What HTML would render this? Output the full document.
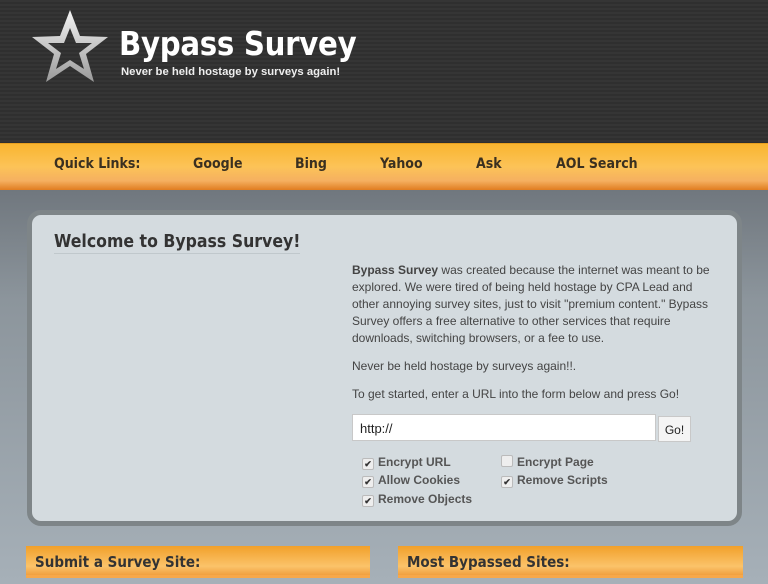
<!DOCTYPE html>
<html><head><style>
body{margin:0;width:768px;height:584px;overflow:hidden;background:linear-gradient(#70777e 190px,#8c959c 300px,#a6b0b8 584px);font-family:"Liberation Sans",sans-serif;position:relative}
.hd{position:absolute;left:0;top:0;width:768px;height:143px;background:repeating-linear-gradient(#353535 0 2px,#2f2f2f 2px 4px)}
.c{font-family:"DejaVu Sans Condensed","DejaVu Sans",sans-serif;font-stretch:condensed}
.title{position:absolute;left:119px;top:25px;color:#fff;font-weight:bold;font-size:32.5px;letter-spacing:-0.3px}
.sub{position:absolute;left:121px;top:66px;color:#eee;font:bold 11.3px "Liberation Sans",sans-serif}
.nav{position:absolute;left:0;top:143px;width:768px;height:46px;background:linear-gradient(#f9b530 0,#fcc358 50%,#f5b060 80%,#e07d20 100%);border-top:1px solid #e8a020}
.nav span{position:absolute;top:12px;font-weight:bold;font-size:14px;color:#3a3020}
.panel{position:absolute;left:27px;top:210px;width:705px;height:306px;background:#d4dbdf;border:5px solid #7e8588;border-radius:14px}
.h1{position:absolute;left:22px;top:17px;font-weight:bold;font-size:17.5px;color:#333;border-bottom:1px solid #c0c8cc;padding-bottom:1px}
.txt{position:absolute;left:320px;top:47px;width:370px;font-size:12px;line-height:17px;color:#444}
.txt p{margin:0 0 11px}
.in{position:absolute;left:320px;top:199px;height:27px;background:#fff;border:1px solid #c8c8c8;font-size:13px;line-height:27px;padding-left:7px;box-sizing:border-box;width:304px;color:#222}
.go{position:absolute;left:626px;top:201px;width:33px;height:26px;background:#f4f4f4;border:1px solid #c8c8c8;font-size:12px;line-height:26px;text-align:center;color:#222;box-sizing:border-box}
.cb{position:absolute;font:bold 12px "Liberation Sans",sans-serif;color:#555}
.cb i{display:inline-block;width:10px;height:10px;border:1px solid #bbb;background:#eee;border-radius:2px;margin-right:4px;font-style:normal;font-size:9px;line-height:10px;text-align:center;color:#333;vertical-align:-1px}
.box{position:absolute;top:546px;height:32px;background:linear-gradient(#f1a02a,#fbc36a 70%,#f0a040);border-bottom:3px solid #f7a84a;font-weight:bold;font-size:15px;color:#333;line-height:32px;padding-left:9px;box-sizing:border-box}
</style></head><body>
<div class="hd">
<svg style="position:absolute;left:30px;top:8px" width="80" height="77" viewBox="0 0 80 77"><defs><linearGradient id="g" x1="0" y1="0" x2="0" y2="1"><stop offset="0" stop-color="#f4f4f4"/><stop offset="1" stop-color="#9a9a9a"/></linearGradient></defs><path d="M40 2 L50 28 L78 29 L56 46 L64 74 L40 58 L16 74 L24 46 L2 29 L30 28 Z M40 20 L34 35 L18 35 L31 45 L26 61 L40 52 L54 61 L49 45 L62 35 L46 35 Z" fill="url(#g)" fill-rule="evenodd"/></svg>
<div class="title c">Bypass Survey</div>
<div class="sub">Never be held hostage by surveys again!</div>
</div>
<div class="nav c"><span style="left:54px">Quick Links:</span><span style="left:193px">Google</span><span style="left:295px">Bing</span><span style="left:380px">Yahoo</span><span style="left:476px">Ask</span><span style="left:556px">AOL Search</span></div>
<div class="panel">
<div class="h1 c">Welcome to Bypass Survey!</div>
<div class="txt"><p><b>Bypass Survey</b> was created because the internet was meant to be explored. We were tired of being held hostage by CPA Lead and other annoying survey sites, just to visit "premium content." Bypass Survey offers a free alternative to other services that require downloads, switching browsers, or a fee to use.</p><p>Never be held hostage by surveys again!!.</p><p>To get started, enter a URL into the form below and press Go!</p></div>
<div class="in">http://</div><div class="go">Go!</div>
<div class="cb" style="left:330px;top:240px"><i>✔</i>Encrypt URL</div>
<div class="cb" style="left:330px;top:258px"><i>✔</i>Allow Cookies</div>
<div class="cb" style="left:330px;top:277px"><i>✔</i>Remove Objects</div>
<div class="cb" style="left:469px;top:240px"><i></i>Encrypt Page</div>
<div class="cb" style="left:469px;top:258px"><i>✔</i>Remove Scripts</div>
</div>
<div class="box c" style="left:26px;width:344px">Submit a Survey Site:</div>
<div class="box c" style="left:398px;width:345px">Most Bypassed Sites:</div>
</body></html>
